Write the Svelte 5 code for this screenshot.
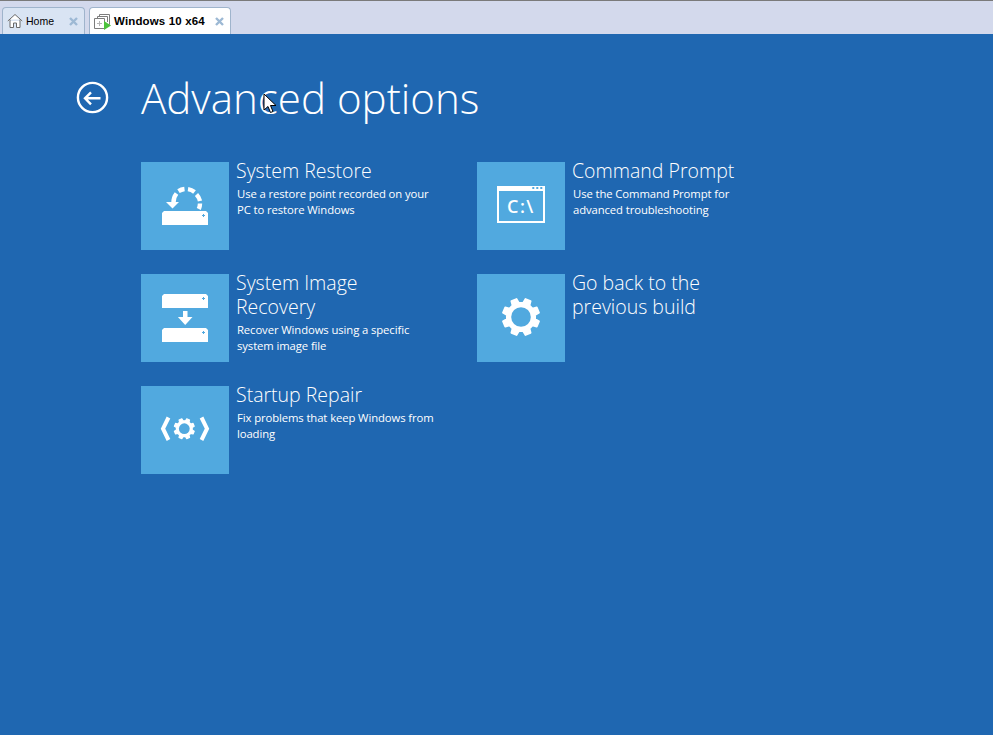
<script>
  function gear(cx, cy, R, r, n = 8) {
    let d = '';
    const step = (Math.PI * 2) / n;
    for (let i = 0; i < n; i++) {
      const a = (i + 0.5) * step - Math.PI / 2;
      const pts = [
        [a - step * 0.3, r], [a - step * 0.19, R], [a + step * 0.19, R], [a + step * 0.3, r]
      ];
      pts.forEach(([t, q], j) => {
        const x = (cx + Math.cos(t) * q).toFixed(2);
        const y = (cy + Math.sin(t) * q).toFixed(2);
        d += (i === 0 && j === 0 ? 'M' : 'L') + x + ' ' + y + ' ';
      });
    }
    return d + 'Z';
  }
  const bigGear = gear(44, 43, 18.4, 14.2);
  const smallGear = gear(43.3, 42.7, 10.2, 8);

  const left = [
    { kind: 'restore', title: 'System Restore', desc: 'Use a restore point recorded on your PC to restore Windows' },
    { kind: 'image', title: 'System Image Recovery', desc: 'Recover Windows using a specific system image file' },
    { kind: 'repair', title: 'Startup Repair', desc: 'Fix problems that keep Windows from loading' }
  ];
  const right = [
    { kind: 'cmd', title: 'Command Prompt', desc: 'Use the Command Prompt for advanced troubleshooting' },
    { kind: 'gear', title: 'Go back to the previous build', desc: '' }
  ];
</script>

{#snippet drive(y)}
  <path fill="#fff" d="M23 {y}h42l2 2v12H21V{y + 2}z" />
  <path stroke="#51a9df" stroke-width="1" d="M61 {y + 4.5}h3M62.500 {y + 3}v3" />
{/snippet}

{#snippet close()}
  <svg class="close" width="9" height="9" viewBox="0 0 9 9" fill="none" stroke="#9db9d4" stroke-width="2.400">
    <path d="M1 1l7 7M8 1 1 8" />
  </svg>
{/snippet}

{#snippet option(o)}
  <div class="option">
    <div class="tile">
      <svg width="88" height="88" viewBox="0 0 88 88">
        {#if o.kind === 'restore'}
          {@render drive(49)}
          <g fill="none" stroke="#fff" stroke-width="4.400">
            <path d="M32.500 40.500 A14 14 0 0 1 35.500 31.500" />
            <path d="M37.500 29.200 A14 14 0 0 1 43.500 27" />
            <path d="M47 27.200 A14 14 0 0 1 53.500 30" />
            <path d="M55.500 32.500 A14 14 0 0 1 59 39" />
            <path d="M59 41.500 A14 14 0 0 1 57.800 47" />
          </g>
          <path fill="#fff" d="M25 40h13l-6.500 6.500z" />
        {:else if o.kind === 'image'}
          {@render drive(20)}
          {@render drive(54)}
          <path fill="#fff" d="M42 37h4.500v6h5l-7.300 8-7.300-8h5.100z" />
        {:else if o.kind === 'repair'}
          <path fill="none" stroke="#fff" stroke-width="4" d="M27.500 31.500 L22 42.700 L27.500 54 M60.500 31.500 L66 42.700 L60.500 54" />
          <path fill="#fff" stroke="#fff" stroke-width="1.200" stroke-linejoin="round" d={smallGear} />
          <circle cx="43.300" cy="42.700" r="5.400" fill="#51a9df" />
        {:else if o.kind === 'cmd'}
          <path fill="#fff" fill-rule="evenodd" d="M20 24h48v37H20z M22 29v30h44V29z" />
          <path stroke="#51a9df" stroke-width="2" d="M55.300 26h2M59.300 26h2M63.300 26h2" />
          <text class="prompt" x="30" y="51">C:\</text>
        {:else}
          <path fill="#fff" stroke="#fff" stroke-width="2" stroke-linejoin="round" d={bigGear} />
          <circle cx="44" cy="43" r="9.800" fill="#51a9df" />
        {/if}
      </svg>
    </div>
    <div class="copy">
      <h2>{o.title}</h2>
      {#if o.desc}<p>{o.desc}</p>{/if}
    </div>
  </div>
{/snippet}

<div class="app">
  <nav class="tabs">
    <div class="tab">
      <svg width="16" height="16" viewBox="0 0 16 16" fill="none" stroke="#6a6a6a">
        <path d="M.8 8 8 1.500 15.200 8M3 6.500V14.500H6.500V10H9.500V14.500H13V6.500" fill="#fff" />
      </svg>
      <span class="label">Home</span>
      {@render close()}
    </div>
    <div class="tab active">
      <svg width="17" height="17" viewBox="0 0 17 17" fill="none" stroke="#7d7d7d">
        <path d="M5.500 3.500V1.500H15.500V11.500H12" />
        <path d="M3.500 5.500V3.500H13.500V9" />
        <path d="M.5 5.500H10.500V15.500H.5z" fill="#fff" />
        <path d="M5.500 8V13M3 10.500H8" stroke="#b5b5b5" />
        <path d="M10 8l7 4.500-7 4.500z" fill="#4cc23c" stroke="none" />
      </svg>
      <span class="label">Windows 10 x64</span>
      {@render close()}
    </div>
  </nav>

  <main class="screen">
    <header class="head">
      <svg class="back" width="34" height="34" viewBox="0 0 34 34" fill="none" stroke="#fff">
        <circle cx="17.500" cy="16.500" r="14.600" stroke-width="2.400" />
        <path d="M10 17.300H25.500M16 11.300 10 17.300 16 23.300" stroke-width="2.400" />
      </svg>
      <h1>Advanced options</h1>
    </header>
    <div class="columns">
      <div class="column">{#each left as o}{@render option(o)}{/each}</div>
      <div class="column">{#each right as o}{@render option(o)}{/each}</div>
    </div>
    <svg class="cursor" width="14" height="22" viewBox="0 0 14 22">
      <path d="M1 1v16l4-3.500 2.500 6 2.500-1-2.500-6H13z" fill="#fff" stroke="#000" />
    </svg>
  </main>
</div>

<style>
  :global(body) {
    margin: 0;
    overflow: hidden;
  }
  .app {
    width: 993px;
    height: 735px;
    display: flex;
    flex-direction: column;
    font-family: "Open Sans", "Noto Sans", sans-serif;
  }
  .tabs {
    box-sizing: border-box;
    height: 34px;
    flex: none;
    display: flex;
    align-items: flex-end;
    gap: 4px;
    padding-left: 2px;
    background: #d3d9ec;
    border-top: 1px solid #7a7a7a;
  }
  .tab {
    box-sizing: border-box;
    width: 83px;
    height: 27px;
    display: flex;
    align-items: center;
    padding: 0 6px 0 4px;
    background: #d9e4f3;
    border: 1px solid #9fb4cc;
    border-bottom: none;
    border-radius: 4px 4px 0 0;
    font: 10.500px "Liberation Sans", Arial, sans-serif;
    color: #000;
  }
  .tab .label {
    margin-left: 3px;
    flex: 1;
  }
  .tab.active {
    width: 142px;
    background: #fff;
    font-size: 11.500px;
    font-weight: 700;
    letter-spacing: 0.15px;
  }
  .close {
    flex: none;
  }
  .screen {
    position: relative;
    flex: 1;
    background: #1f67b1;
    color: #fff;
  }
  .head {
    display: flex;
    align-items: center;
    height: 76px;
    padding: 26px 0 0 75px;
  }
  .back {
    margin-right: 32px;
    overflow: visible;
  }
  h1 {
    margin: 0;
    font-weight: 300;
    font-size: 42.100px;
    line-height: 76px;
  }
  .columns {
    display: flex;
    padding: 26px 0 0 141px;
  }
  .column {
    width: 336px;
    display: flex;
    flex-direction: column;
    gap: 24px;
  }
  .option {
    display: flex;
    height: 88px;
    gap: 7px;
  }
  .tile {
    width: 88px;
    height: 88px;
    flex: none;
    background: #51a9df;
  }
  .tile svg {
    display: block;
  }
  .prompt {
    font: 600 18px "Open Sans", sans-serif;
    letter-spacing: 1.5px;
    fill: #fff;
  }
  .copy {
    width: 205px;
  }
  h2 {
    width: 170px;
    margin: -3px 0 0;
    font-weight: 300;
    font-size: 19.500px;
    line-height: 24px;
  }
  p {
    margin: 3px 0 0 1px;
    font-size: 11.300px;
    line-height: 16px;
    font-weight: 400;
    letter-spacing: -0.1px;
  }
  .cursor {
    position: absolute;
    left: 263px;
    top: 59px;
  }
</style>
